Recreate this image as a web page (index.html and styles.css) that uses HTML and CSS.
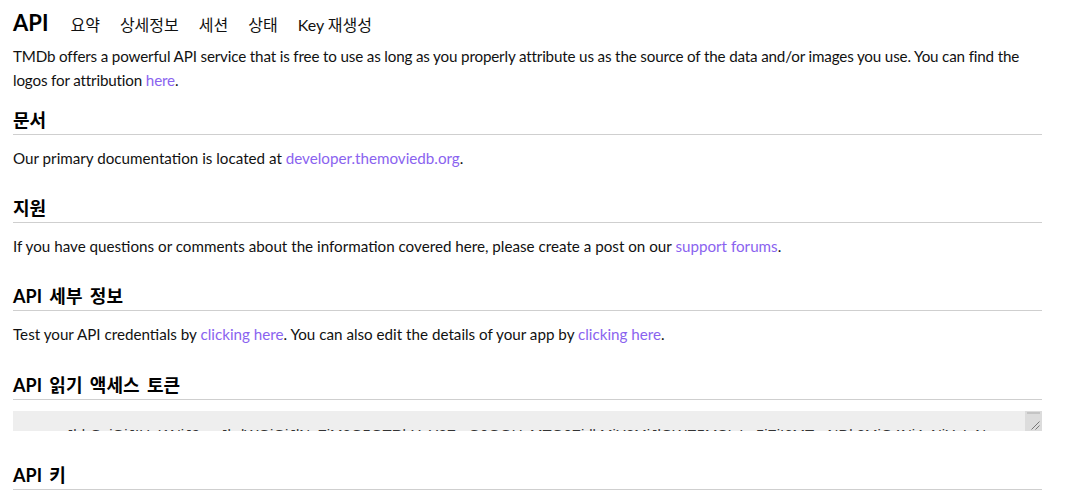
FILE: index.html
```html
<!DOCTYPE html>
<html lang="ko">
<head>
<meta charset="utf-8">
<title>API</title>
<link rel="stylesheet" href="styles.css">
</head>
<body>
<div class="page">
  <header class="topbar">
    <h1 class="title">API</h1>
    <nav class="subnav">
      <a href="#">요약</a>
      <a href="#">상세정보</a>
      <a href="#">세션</a>
      <a href="#">상태</a>
      <a href="#">Key 재생성</a>
    </nav>
  </header>

  <p class="intro">TMDb offers a powerful API service that is free to use as long as you properly attribute us as the source of the data and/or images you use. You can find the logos for attribution <a href="#" class="link">here</a>.</p>

  <section class="section">
    <h2 class="section-title">문서</h2>
    <p class="text">Our primary documentation is located at <a href="#" class="link">developer.themoviedb.org</a>.</p>
  </section>

  <section class="section">
    <h2 class="section-title">지원</h2>
    <p class="text">If you have questions or comments about the information covered here, please create a post on our <a href="#" class="link">support forums</a>.</p>
  </section>

  <section class="section">
    <h2 class="section-title">API 세부 정보</h2>
    <p class="text">Test your API credentials by <a href="#" class="link">clicking here</a>. You can also edit the details of your app by <a href="#" class="link">clicking here</a>.</p>
  </section>

  <section class="section section-token">
    <h2 class="section-title">API 읽기 액세스 토큰</h2>
    <div class="token-box">
      <div class="token-text">eyJhbGciOiJIUzI1NiJ9.eyJhdWQiOiJlNzFiM2Q5OTRhYzY3ZmQ0OGUzMTQ0ZjdkMjY3MjJlOWE5MSIsIm5iZiI6MTcxNDk3MjQ4Ni4xNjYsInN1YiI6IjY2MzhmMjA2NjY1NjVhMDEyMzJkZDljYiIsInNjb3BlcyI6WyJhcGlfcmVhZCJdLCJ2ZXJzaW9uIjoxfQ.3bYw9kZr7QxPqN2mT8vLh5sJcW1uYdFgE4aRkHn6oXp</div>
      <div class="scrollbar">
        <span class="thumb"></span>
        <svg class="grip" width="9" height="9" viewBox="0 0 9 9"><path d="M8.5 0.5 L0.5 8.5 M8.5 4.5 L4.5 8.5" stroke="#777" stroke-width="1" fill="none"/></svg>
      </div>
    </div>
  </section>

  <section class="section">
    <h2 class="section-title">API 키</h2>
  </section>
</div>
</body>
</html>
```

FILE: styles.css
```css
* { box-sizing: border-box; }

html, body {
  margin: 0;
  padding: 0;
  background: #fff;
}

body {
  font-family: "Lato", "Noto Sans CJK KR", sans-serif;
  font-size: 15.2px;
  line-height: 24px;
  color: #111;
}

.page {
  padding: 8px 34px 0 13px;
}

.topbar {
  display: flex;
  align-items: baseline;
  gap: 22px;
  height: 36px;
}

.title {
  margin: 0;
  font-size: 22px;
  line-height: 30px;
  font-weight: 700;
  color: #000;
}

.subnav {
  display: flex;
  gap: 20px;
  font-size: 16px;
}

.subnav a {
  color: #111;
  text-decoration: none;
}

.intro {
  margin: 0 0 14px;
  letter-spacing: -0.16px;
}

.link {
  color: #8a63ef;
  text-decoration: none;
}

.section + .section {
  margin-top: 24px;
}

.section + .section-token {
  margin-top: 25px;
}

.section-title {
  margin: 0 0 11px;
  font-size: 18px;
  line-height: 28px;
  font-weight: 700;
  word-spacing: 3px;
  color: #000;
  border-bottom: 1px solid #cfcfcf;
}

.text {
  margin: 0;
}

.token-box {
  display: flex;
  height: 20px;
  background: #eeeeee;
  overflow: hidden;
  margin-bottom: 30px;
}

.token-text {
  flex: 1;
  padding: 14px 36px 0 37px;
  font-family: "Liberation Sans", sans-serif;
  font-size: 15px;
  line-height: 20px;
  color: #333;
  word-break: break-all;
  overflow: hidden;
}

.scrollbar {
  flex: 0 0 17px;
  background: #dcdcdc;
  display: flex;
  flex-direction: column;
  align-items: center;
  justify-content: space-between;
  padding: 1px 0 0;
}

.thumb {
  display: block;
  width: 13px;
  height: 2px;
  background: #c4c4c4;
}

.grip {
  align-self: flex-end;
  margin: 0 2px 1px 0;
}
```
